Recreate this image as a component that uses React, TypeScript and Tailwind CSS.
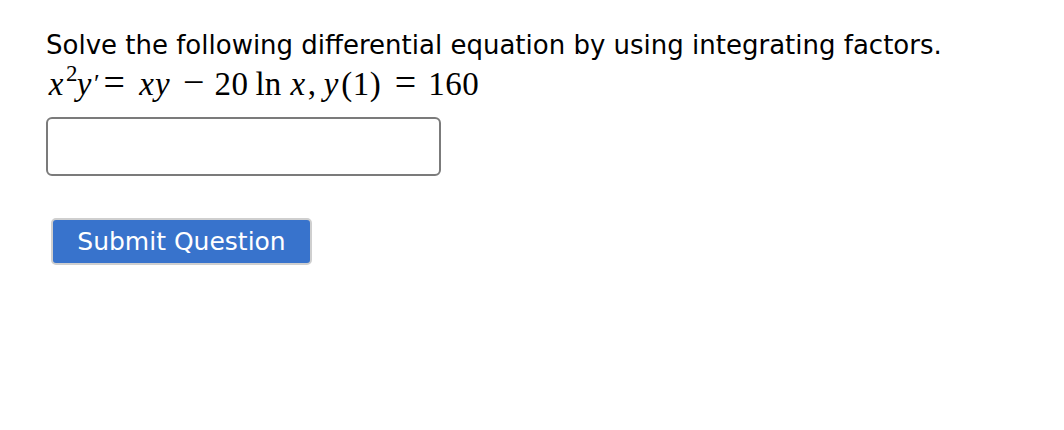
import React from "react";

const serif = { fontFamily: '"Liberation Serif", "DejaVu Serif", serif' };

export default function App() {
  return (
    <div
      className="w-[1064px] h-[430px] bg-white text-black"
      style={{ fontFamily: '"DejaVu Sans", Verdana, sans-serif' }}
    >
      <div className="pl-[46px] pt-[29px]">
        <div className="text-[26px] leading-[32px] whitespace-nowrap">
          Solve the following differential equation by using integrating factors.
        </div>
        <div
          className="mt-[1px] h-[42px] flex items-baseline text-[33px] leading-[40px] whitespace-nowrap"
          style={serif}
        >
          <span className="inline-block w-[20px] italic text-center">x</span>
          <span className="inline-block w-[8px] text-[23px] relative top-[-14px]">2</span>
          <span className="inline-block w-[20px] italic text-center">y</span>
          <span className="inline-block w-[7px] text-[26px] relative top-[-3px]">′</span>
          <span className="inline-block w-[26.5px] text-center text-[38px] leading-[40px]">=</span>
          <span className="inline-block w-[36px] ml-[9.5px] italic text-center tracking-[1px]">xy</span>
          <span className="inline-block w-[26.5px] ml-[7.5px] text-center text-[38px] leading-[40px]">−</span>
          <span className="inline-block w-[34px] ml-[7.5px] text-center tracking-[0.5px]">20</span>
          <span className="inline-block w-[28.3px] ml-[5.7px] text-center">ln</span>
          <span className="inline-block w-[19.5px] ml-[5.7px] italic text-center">x</span>
          <span className="inline-block w-[9.4px]">,</span>
          <span className="inline-block w-[16.7px] ml-[5.7px] italic text-center">y</span>
          <span className="inline-block w-[43.4px] text-center tracking-[0.5px]">(1)</span>
          <span className="inline-block w-[26.5px] ml-[9.4px] text-center text-[38px] leading-[40px]">=</span>
          <span className="inline-block w-[51px] ml-[9.5px] text-center tracking-[0.5px]">160</span>
        </div>
        <input
          type="text"
          aria-label="answer"
          className="block mt-[13px] w-[395px] h-[59px] border-2 border-[#7b7b7b] rounded-[6px] bg-white outline-none"
        />
        <button
          className="mt-[42px] ml-[5px] w-[261px] h-[47px] flex items-center justify-center bg-[#3873cc] text-white text-[25px] border-2 border-[#cfcfcf] rounded-[5px]"
          style={{ fontFamily: '"DejaVu Sans", Verdana, sans-serif' }}
        >
          Submit Question
        </button>
      </div>
    </div>
  );
}
